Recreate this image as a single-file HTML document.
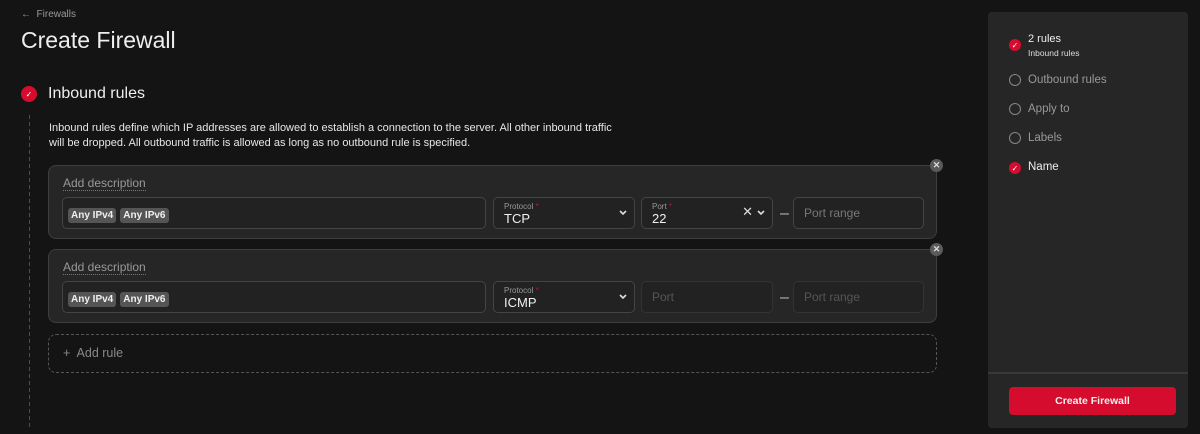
<!DOCTYPE html><html><head><style>
*{box-sizing:border-box;margin:0;padding:0}
body{width:1200px;height:434px;background:#141414;font-family:"Liberation Sans",sans-serif;color:#e8e8e8;position:relative;overflow:hidden}
.a{position:absolute}
.chk{position:absolute;border-radius:50%;background:#d50c2d;color:#fff;display:flex;align-items:center;justify-content:center;font-size:8px}
.card{position:absolute;left:48px;width:889px;background:#262626;border:1px solid #3e3e3e;border-radius:8px}
.inp{position:absolute;border:1px solid #444;border-radius:5px;background:#222;height:32px}
.lbl{position:absolute;left:10px;top:4px;font-size:8px;color:#999}
.lbl b{color:#d50c2d;font-weight:normal}
.val{position:absolute;left:10px;top:13px;font-size:13px;color:#f0f0f0}
.ph{position:absolute;left:10px;top:8px;font-size:12px;color:#777}
.tag{display:inline-block;background:#555;color:#f0f0f0;border-radius:3px;font-size:10px;font-weight:bold;padding:2px 3px;margin-right:4px}
.x{position:absolute;width:13px;height:13px;border-radius:50%;background:#5a5a5a;color:#ddd;font-size:9px;display:flex;align-items:center;justify-content:center;font-weight:bold}
.car{position:absolute;right:6px;top:10px}
.desc{position:absolute;left:14px;top:10px;font-size:12px;color:#999;border-bottom:1px dotted #777}
.st{position:absolute;left:1009px;font-size:11.5px;color:#999;display:flex;align-items:center}
.ring{width:12px;height:12px;border:1.5px solid #888;border-radius:50%;margin-right:7px}
</style></head><body>
<div class="a" style="left:21px;top:9px;font-size:10px;color:#999">←&nbsp; Firewalls</div>
<div class="a" style="left:21px;top:27px;font-size:23px;color:#eee">Create Firewall</div>
<div class="chk" style="left:21px;top:86px;width:16px;height:16px">✓</div>
<div class="a" style="left:48px;top:85px;font-size:16px;color:#eee">Inbound rules</div>
<div class="a" style="left:29px;top:115px;width:1px;height:315px;background:repeating-linear-gradient(to bottom,#d50c2d 0 4px,transparent 4px 7px)"></div>
<div class="a" style="left:49px;top:121px;font-size:11px;line-height:15px;color:#e6e6e6;width:580px">Inbound rules define which IP addresses are allowed to establish a connection to the server. All other inbound traffic will be dropped. All outbound traffic is allowed as long as no outbound rule is specified.</div>

<div class="card" style="top:165px;height:74px">
<div class="desc">Add description</div>
<div class="inp" style="left:13px;top:31px;width:424px"><div style="position:absolute;left:5px;top:7px"><span class="tag">Any IPv4</span><span class="tag">Any IPv6</span></div></div>
<div class="inp" style="left:444px;top:31px;width:142px"><div class="lbl">Protocol <b>*</b></div><div class="val">TCP</div><svg class="car" width="10" height="10"><path d="M2 3l3 3 3-3" stroke="#ddd" stroke-width="1.6" fill="none"/></svg></div>
<div class="inp" style="left:592px;top:31px;width:132px"><div class="lbl">Port <b>*</b></div><div class="val">22</div><span style="position:absolute;right:19px;top:6px;font-size:13px;color:#ddd">✕</span><svg class="car" width="10" height="10"><path d="M2 3l3 3 3-3" stroke="#ddd" stroke-width="1.6" fill="none"/></svg></div>
<div class="a" style="left:731px;top:39px;color:#bbb">–</div>
<div class="inp" style="left:744px;top:31px;width:131px"><div class="ph">Port range</div></div>
</div>
<div class="x" style="left:930px;top:159px">✕</div>

<div class="card" style="top:249px;height:74px">
<div class="desc">Add description</div>
<div class="inp" style="left:13px;top:31px;width:424px"><div style="position:absolute;left:5px;top:7px"><span class="tag">Any IPv4</span><span class="tag">Any IPv6</span></div></div>
<div class="inp" style="left:444px;top:31px;width:142px"><div class="lbl">Protocol <b>*</b></div><div class="val">ICMP</div><svg class="car" width="10" height="10"><path d="M2 3l3 3 3-3" stroke="#ddd" stroke-width="1.6" fill="none"/></svg></div>
<div class="inp" style="left:592px;top:31px;width:132px;border-color:#333"><div class="ph" style="color:#555">Port</div></div>
<div class="a" style="left:731px;top:39px;color:#bbb">–</div>
<div class="inp" style="left:744px;top:31px;width:131px;border-color:#333"><div class="ph" style="color:#555">Port range</div></div>
</div>
<div class="x" style="left:930px;top:243px">✕</div>

<div class="a" style="left:48px;top:334px;width:889px;height:39px;border:1.5px dashed #555;border-radius:8px"><div style="position:absolute;left:14px;top:11px;font-size:12.5px;color:#888">+&nbsp; Add rule</div></div>

<div class="a" style="left:988px;top:12px;width:200px;height:416px;background:#262626;border-radius:4px"></div>
<div class="a" style="left:988px;top:372px;width:200px;height:2px;background:#383838"></div>
<div class="chk" style="left:1009px;top:39px;width:12px;height:12px">✓</div>
<div class="a" style="left:1028px;top:33px;font-size:11px;color:#eee">2 rules</div>
<div class="a" style="left:1028px;top:48px;font-size:8.5px;color:#ddd">Inbound rules</div>
<div class="st" style="top:74px"><div class="ring"></div>Outbound rules</div>
<div class="st" style="top:103px"><div class="ring"></div>Apply to</div>
<div class="st" style="top:132px"><div class="ring"></div>Labels</div>
<div class="chk" style="left:1009px;top:162px;width:12px;height:12px">✓</div>
<div class="a" style="left:1028px;top:161px;font-size:11.5px;color:#eee">Name</div>
<div class="a" style="left:1009px;top:387px;width:167px;height:28px;background:#d50c2d;border-radius:4px;color:#f0f0f0;font-size:10.5px;font-weight:bold;display:flex;align-items:center;justify-content:center">Create Firewall</div>
</body></html>
